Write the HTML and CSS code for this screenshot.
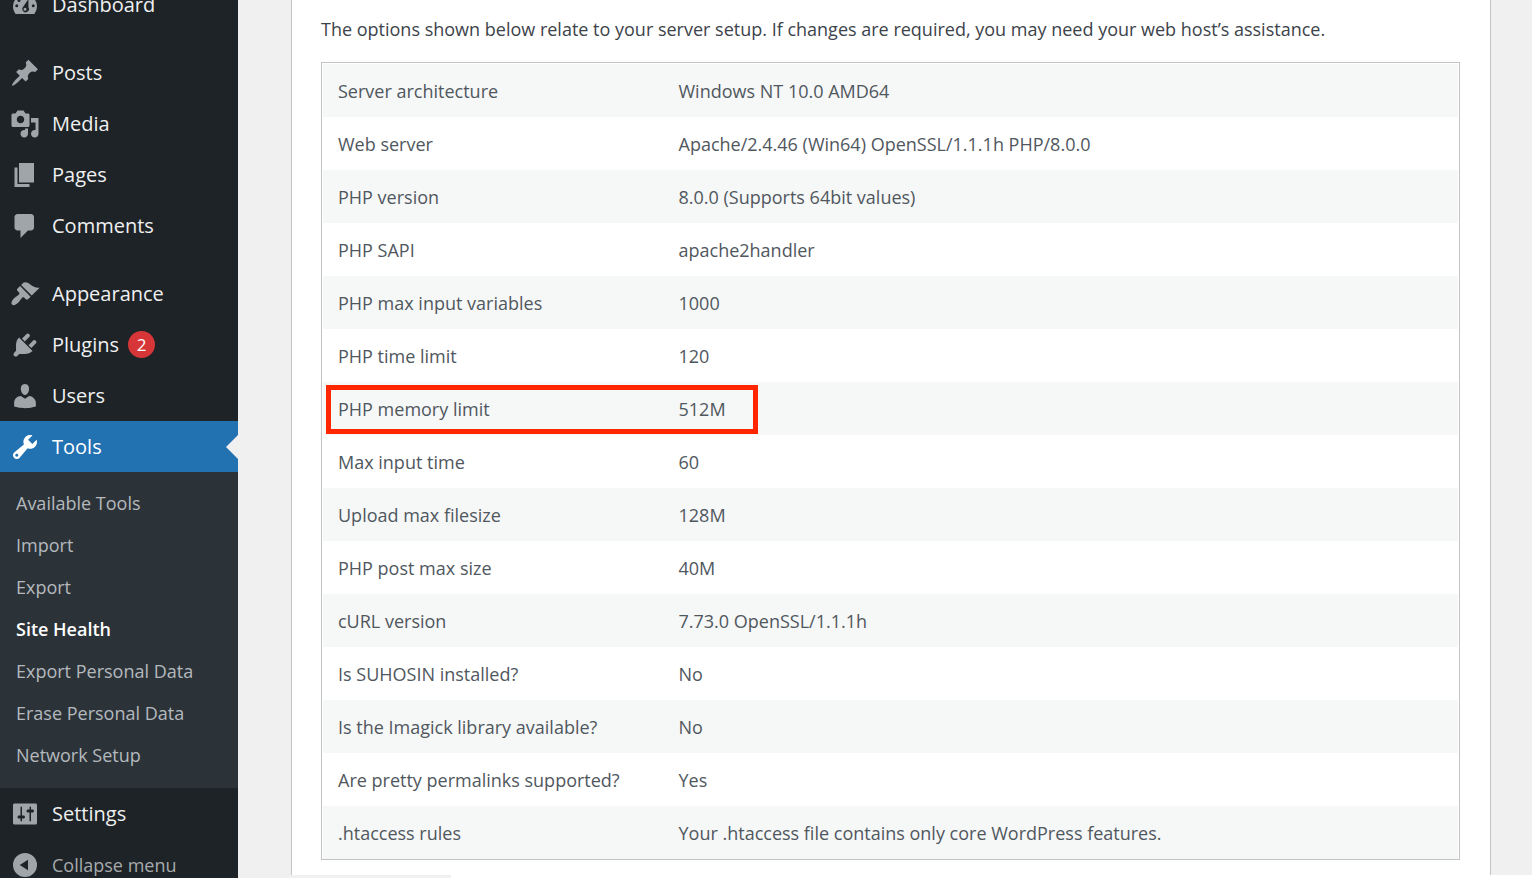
FILE: index.html
```html
<!DOCTYPE html>
<html lang="en">
<head>
  <meta charset="UTF-8">
  <meta name="viewport" content="width=device-width, initial-scale=1.0">
  <title>Site Health Info</title>
  <link rel="stylesheet" href="styles.css">
</head>
<body>

  <!-- Admin menu -->
  <nav class="sidebar">
    <ul class="menu">
      <li>
        <a href="#"><svg viewBox="0 0 20 20"><path fill-rule="evenodd" d="M3.76 16h12.48A7.98 7.98 0 0 0 18 11a8 8 0 1 0-16 0c0 1.89.66 3.63 1.76 5zM10 4a1 1 0 1 1 0 2 1 1 0 0 1 0-2zM6 6a1 1 0 1 1 0 2 1 1 0 0 1 0-2zm6.300 0v5.500a2.200 2.200 0 1 1-3.500-.3zM10 11.800a1 1 0 1 0 0 2 1 1 0 0 0 0-2zM4.500 9.500a1 1 0 1 1 0 2 1 1 0 0 1 0-2zm11 0a1 1 0 1 1 0 2 1 1 0 0 1 0-2z"/></svg>Dashboard</a>
      </li>
      <li class="separator"></li>
      <li>
        <a href="#"><svg viewBox="0 0 20 20"><path d="M10.44 3.02l1.82-1.82 6.36 6.35-1.83 1.82c-1.05-.68-2.48-.57-3.41.36l-.75.75c-.92.93-1.04 2.35-.35 3.41l-1.83 1.82-2.41-2.41-2.8 2.79c-.42.42-3.38 2.71-3.8 2.29s1.86-3.39 2.28-3.81l2.79-2.79L4.1 9.36l1.83-1.82c1.05.69 2.48.57 3.4-.36l.75-.75c.93-.92 1.05-2.35.36-3.41z"/></svg>Posts</a>
      </li>
      <li>
        <a href="#"><svg viewBox="0 0 20 20"><path d="M13 11V4c0-.55-.45-1-1-1h-1.67L9 1H5L3.67 3H2c-.55 0-1 .45-1 1v7c0 .55.45 1 1 1h10c.55 0 1-.45 1-1zM7 4.5c1.38 0 2.5 1.12 2.5 2.5S8.38 9.5 7 9.5 4.5 8.38 4.5 7 5.62 4.5 7 4.5zM14 6h5v10.5c0 1.38-1.12 2.5-2.5 2.5S14 17.88 14 16.5s1.12-2.5 2.5-2.5c.17 0 .34.02.5.05V9h-3V6zm-4 8.05V13h2v3.5c0 1.38-1.12 2.5-2.5 2.5S7 17.88 7 16.5 8.12 14 9.5 14c.17 0 .34.02.5.05z"/></svg>Media</a>
      </li>
      <li>
        <a href="#"><svg viewBox="0 0 20 20"><path d="M6 15V2h10v13H6zm-1 1h8v2H3V5h2v11z"/></svg>Pages</a>
      </li>
      <li>
        <a href="#"><svg viewBox="0 0 20 20"><path d="M5 2h9c1.1 0 2 .9 2 2v7c0 1.1-.9 2-2 2h-2l-5 5v-5H5c-1.1 0-2-.9-2-2V4c0-1.1.9-2 2-2z"/></svg>Comments</a>
      </li>
      <li class="separator"></li>
      <li>
        <a href="#"><svg viewBox="0 0 20 20"><path d="M14.48 11.06L7.41 3.99l1.5-1.5c.5-.56 2.3-.47 3.51.32 1.21.8 1.43 1.28 2.91 2.1 1.18.64 2.45 1.26 4.45.85zm-.71.71L6.7 4.7 4.93 6.47c-.39.39-.39 1.02 0 1.41l1.06 1.06c.39.39.39 1.03 0 1.42-.6.6-1.43 1.11-2.21 1.69-.35.26-.7.53-1.01.84C1.43 14.23.4 16.08 1.4 17.07c.99 1 2.84-.03 4.18-1.36.31-.31.58-.66.85-1.02.57-.78 1.08-1.61 1.69-2.21.39-.39 1.02-.39 1.41 0l1.06 1.06c.39.39 1.02.39 1.41 0z"/></svg>Appearance</a>
      </li>
      <li>
        <a href="#"><svg viewBox="0 0 20 20"><path d="M13.11 4.36L9.87 7.6 8 5.73l3.24-3.24c.35-.34 1.05-.2 1.56.32.52.51.66 1.21.31 1.55zm-8 1.77l.91-1.12 9.01 9.01-1.19.84c-.71.71-2.63 1.16-3.82 1.16H6.14L4.9 17.26c-.59.59-1.54.59-2.12 0-.59-.58-.59-1.53 0-2.12l1.24-1.24v-3.88c0-1.13.4-3.19 1.09-3.89zm7.26 3.97l3.24-3.24c.34-.35 1.04-.21 1.55.31.52.51.66 1.21.31 1.55l-3.24 3.25z"/></svg>Plugins <span class="count">2</span></a>
      </li>
      <li>
        <a href="#"><svg viewBox="0 0 20 20"><path d="M10 9.25c-2.27 0-2.73-3.44-2.73-3.44C7 4.02 7.82 2 9.97 2c2.16 0 2.98 2.02 2.71 3.81 0 0-.41 3.44-2.68 3.44zm0 2.57L12.72 10c2.39 0 4.52 2.33 4.52 4.53v2.49s-3.65 1.13-7.24 1.13c-3.65 0-7.24-1.13-7.24-1.13v-2.49c0-2.25 1.94-4.48 4.47-4.48z"/></svg>Users</a>
      </li>
      <li class="current">
        <a href="#"><svg viewBox="0 0 20 20"><path d="M16.68 9.77c-1.34 1.34-3.3 1.67-4.95.99l-5.41 6.52c-.99.99-2.59.99-3.58 0s-.99-2.59 0-3.57l6.52-5.42c-.68-1.65-.35-3.61.99-4.95 1.28-1.28 3.12-1.62 4.72-1.06l-2.89 2.89 2.82 2.82 2.86-2.87c.53 1.58.18 3.39-1.08 4.65zM3.81 16.21c.4.39 1.04.39 1.43 0 .4-.4.4-1.04 0-1.43-.39-.4-1.03-.4-1.43 0-.39.39-.39 1.03 0 1.43z"/></svg>Tools</a>
        <ul class="submenu">
          <li><a href="#">Available Tools</a></li>
          <li><a href="#">Import</a></li>
          <li><a href="#">Export</a></li>
          <li><a href="#" class="active">Site Health</a></li>
          <li><a href="#">Export Personal Data</a></li>
          <li><a href="#">Erase Personal Data</a></li>
          <li><a href="#">Network Setup</a></li>
        </ul>
      </li>
      <li>
        <a href="#"><svg viewBox="0 0 20 20"><path d="M18 16V4c0-.55-.45-1-1-1H3c-.55 0-1 .45-1 1v12c0 .55.45 1 1 1h14c.55 0 1-.45 1-1zM8 11h1c.55 0 1 .45 1 1s-.45 1-1 1H8v1.5c0 .28-.22.5-.5.5s-.5-.22-.5-.5V13H6c-.55 0-1-.45-1-1s.45-1 1-1h1V5.5c0-.28.22-.5.5-.5s.5.22.5.5V11zm5-2h-1c-.55 0-1-.45-1-1s.45-1 1-1h1V5.5c0-.28.22-.5.5-.5s.5.22.5.5V7h1c.55 0 1 .45 1 1s-.45 1-1 1h-1v5.5c0 .28-.22.5-.5.5s-.5-.22-.5-.5V9z"/></svg>Settings</a>
      </li>
      <li>
        <button type="button" class="collapse"><svg viewBox="0 0 20 20"><path fill-rule="evenodd" d="M10 2a8 8 0 1 1 0 16 8 8 0 0 1 0-16zm2 4.5L6.5 10l5.5 3.5z"/></svg>Collapse menu</button>
      </li>
    </ul>
  </nav>

  <!-- Main content -->
  <main class="content">
    <section class="panel">
      <p>The options shown below relate to your server setup. If changes are required, you may need your web host’s assistance.</p>

      <table class="health-table">
        <tbody>
          <tr><td>Server architecture</td><td>Windows NT 10.0 AMD64</td></tr>
          <tr><td>Web server</td><td>Apache/2.4.46 (Win64) OpenSSL/1.1.1h PHP/8.0.0</td></tr>
          <tr><td>PHP version</td><td>8.0.0 (Supports 64bit values)</td></tr>
          <tr><td>PHP SAPI</td><td>apache2handler</td></tr>
          <tr><td>PHP max input variables</td><td>1000</td></tr>
          <tr><td>PHP time limit</td><td>120</td></tr>
          <tr class="marked"><td>PHP memory limit</td><td>512M</td></tr>
          <tr><td>Max input time</td><td>60</td></tr>
          <tr><td>Upload max filesize</td><td>128M</td></tr>
          <tr><td>PHP post max size</td><td>40M</td></tr>
          <tr><td>cURL version</td><td>7.73.0 OpenSSL/1.1.1h</td></tr>
          <tr><td>Is SUHOSIN installed?</td><td>No</td></tr>
          <tr><td>Is the Imagick library available?</td><td>No</td></tr>
          <tr><td>Are pretty permalinks supported?</td><td>Yes</td></tr>
          <tr><td>.htaccess rules</td><td>Your .htaccess file contains only core WordPress features.</td></tr>
        </tbody>
      </table>
    </section>
    <div class="bottom-strip"></div>
  </main>

</body>
</html>
```
FILE: styles.css
```css
*,
*::before,
*::after {
  box-sizing: border-box;
}
body {
  font-family: "Segoe UI", "Open Sans", "Noto Sans", sans-serif;
  font-size: 18px;
  margin: 0;
  display: flex;
  height: 100vh;
  overflow: hidden;
  background-color: #f0f0f0;
  color: #50575e;
}
ul {
  list-style: none;
  margin: 0;
  padding: 0;
}

/* Sidebar */
.sidebar {
  width: 238px;
  flex-shrink: 0;
  background-color: #1d2327;
}
.menu {
  margin-top: -21px;
}
.menu > li > a,
.collapse {
  position: relative;
  display: flex;
  align-items: center;
  gap: 12px;
  width: 100%;
  height: 51px;
  padding: 0 10px;
  color: #f0f0f1;
  font-size: 20px;
  text-decoration: none;
}
.menu svg {
  width: 30px;
  height: 30px;
  flex-shrink: 0;
  fill: #a0a5aa;
}
.separator {
  height: 17px;
}
.count {
  width: 27px;
  height: 27px;
  margin-left: -3px;
  border-radius: 50%;
  background-color: #d63638;
  color: #fff;
  font-size: 17px;
  line-height: 27px;
  text-align: center;
}
.menu > .current > a {
  background-color: #2271b1;
  color: #fff;
}
.menu .current svg {
  fill: #fff;
}
.current > a::after {
  content: "";
  position: absolute;
  right: 0;
  border: 12px solid transparent;
  border-right-color: #f0f0f0;
  border-left: 0;
}
.submenu {
  padding: 10px 0 12px;
  background-color: #2c3338;
}
.submenu a {
  display: block;
  padding: 0 16px;
  color: #b4b9be;
  font-size: 18px;
  line-height: 42px;
  text-decoration: none;
  white-space: nowrap;
}
.submenu .active {
  color: #fff;
  font-weight: 600;
}
.menu .collapse {
  background: none;
  border: none;
  color: #a7aaad;
  font-family: inherit;
  font-size: 18px;
  cursor: pointer;
}

/* Content */
.content {
  flex-grow: 1;
  display: flex;
  flex-direction: column;
}
.panel {
  margin: 0 41px 0 53px;
  padding: 14px 30px 15px 29px;
  background-color: #fff;
  border: 1px solid #c3c4c7;
  border-width: 0 1px;
}
.panel p {
  margin: 0 0 18px;
  color: #3c434a;
  line-height: 30px;
}
.health-table {
  width: 100%;
  border: 1px solid #c3c4c7;
  border-spacing: 0;
  padding: 1px 1px 0;
}
.health-table td {
  height: 53px;
  padding: 0 15px;
}
.health-table td:first-child {
  width: 30%;
}
.health-table tr:nth-child(odd) {
  background-color: #f6f7f7;
}
.marked td:first-child {
  position: relative;
}
/* Red frame over the memory limit row */
.marked td:first-child::before {
  content: "";
  position: absolute;
  top: 3px;
  left: 3px;
  width: 432px;
  height: 49px;
  border: 5px solid #ff2600;
}
.bottom-strip {
  flex-grow: 1;
  margin-left: 213px;
  background-color: #fff;
}
```
